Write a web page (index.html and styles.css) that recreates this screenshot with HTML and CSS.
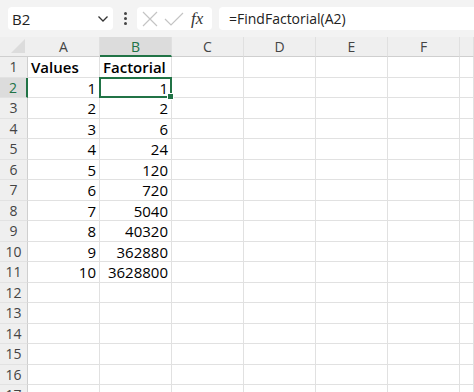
FILE: index.html
```html
<!DOCTYPE html>
<html lang="en">
  <head>
    <meta charset="UTF-8" />
    <title>FindFactorial</title>
    <link rel="stylesheet" href="styles.css">
  </head>
  <body>
    <div class="toolbar">
      <div class="name-box">
        <span>B2</span>
        <svg class="chevron" width="12" height="8" viewBox="0 0 12 8"><path d="M1.5 1.5 L6 6 L10.5 1.5" fill="none" stroke="#333" stroke-width="1.3"/></svg>
      </div>
      <div class="dots"><i></i><i></i><i></i></div>
      <div class="fx-box">
        <svg width="18" height="18" viewBox="0 0 18 18"><path d="M2 2 L16 16 M16 2 L2 16" stroke="#c4c4c4" stroke-width="1.2"/></svg>
        <svg width="20" height="18" viewBox="0 0 20 18"><path d="M1 9 L7 15 L19 3" fill="none" stroke="#c4c4c4" stroke-width="1.2"/></svg>
        <span class="fx">fx</span>
      </div>
      <div class="formula">=FindFactorial(A2)</div>
    </div>

    <div class="sheet">
      <div class="corner"><span class="tri"></span></div>
      <div class="col-head">A</div>
      <div class="col-head active">B</div>
      <div class="col-head">C</div>
      <div class="col-head">D</div>
      <div class="col-head">E</div>
      <div class="col-head">F</div>
      <div class="col-head"></div>

      <div class="row-head">1</div><div class="cell bold">Values</div><div class="cell bold">Factorial</div><div class="cell"></div><div class="cell"></div><div class="cell"></div><div class="cell"></div><div class="cell"></div>
      <div class="row-head active">2</div><div class="cell num">1</div><div class="cell num selected">1</div><div class="cell"></div><div class="cell"></div><div class="cell"></div><div class="cell"></div><div class="cell"></div>
      <div class="row-head">3</div><div class="cell num">2</div><div class="cell num">2</div><div class="cell"></div><div class="cell"></div><div class="cell"></div><div class="cell"></div><div class="cell"></div>
      <div class="row-head">4</div><div class="cell num">3</div><div class="cell num">6</div><div class="cell"></div><div class="cell"></div><div class="cell"></div><div class="cell"></div><div class="cell"></div>
      <div class="row-head">5</div><div class="cell num">4</div><div class="cell num">24</div><div class="cell"></div><div class="cell"></div><div class="cell"></div><div class="cell"></div><div class="cell"></div>
      <div class="row-head">6</div><div class="cell num">5</div><div class="cell num">120</div><div class="cell"></div><div class="cell"></div><div class="cell"></div><div class="cell"></div><div class="cell"></div>
      <div class="row-head">7</div><div class="cell num">6</div><div class="cell num">720</div><div class="cell"></div><div class="cell"></div><div class="cell"></div><div class="cell"></div><div class="cell"></div>
      <div class="row-head">8</div><div class="cell num">7</div><div class="cell num">5040</div><div class="cell"></div><div class="cell"></div><div class="cell"></div><div class="cell"></div><div class="cell"></div>
      <div class="row-head">9</div><div class="cell num">8</div><div class="cell num">40320</div><div class="cell"></div><div class="cell"></div><div class="cell"></div><div class="cell"></div><div class="cell"></div>
      <div class="row-head">10</div><div class="cell num">9</div><div class="cell num">362880</div><div class="cell"></div><div class="cell"></div><div class="cell"></div><div class="cell"></div><div class="cell"></div>
      <div class="row-head">11</div><div class="cell num">10</div><div class="cell num">3628800</div><div class="cell"></div><div class="cell"></div><div class="cell"></div><div class="cell"></div><div class="cell"></div>
      <div class="row-head">12</div><div class="cell"></div><div class="cell"></div><div class="cell"></div><div class="cell"></div><div class="cell"></div><div class="cell"></div><div class="cell"></div>
      <div class="row-head">13</div><div class="cell"></div><div class="cell"></div><div class="cell"></div><div class="cell"></div><div class="cell"></div><div class="cell"></div><div class="cell"></div>
      <div class="row-head">14</div><div class="cell"></div><div class="cell"></div><div class="cell"></div><div class="cell"></div><div class="cell"></div><div class="cell"></div><div class="cell"></div>
      <div class="row-head">15</div><div class="cell"></div><div class="cell"></div><div class="cell"></div><div class="cell"></div><div class="cell"></div><div class="cell"></div><div class="cell"></div>
      <div class="row-head">16</div><div class="cell"></div><div class="cell"></div><div class="cell"></div><div class="cell"></div><div class="cell"></div><div class="cell"></div><div class="cell"></div>
      <div class="row-head">17</div><div class="cell"></div><div class="cell"></div><div class="cell"></div><div class="cell"></div><div class="cell"></div><div class="cell"></div><div class="cell"></div>
    </div>
  </body>
</html>
```

FILE: styles.css
```css
body {
  margin: 0;
  width: 474px;
  height: 392px;
  overflow: hidden;
  background-color: #ffffff;
  font-family: "Open Sans", "Noto Sans", Arial, sans-serif;
  color: #000;
}

.toolbar {
  height: 37px;
  box-sizing: border-box;
  background-color: #f3f3f3;
  display: flex;
  align-items: center;
  padding: 0 0 0 8px;
}

.name-box {
  width: 105px;
  height: 23px;
  box-sizing: border-box;
  background-color: #fff;
  border-radius: 4px;
  display: flex;
  align-items: center;
  justify-content: space-between;
  padding: 0 4px;
  font-size: 15px;
  color: #222;
}

.dots {
  width: 24px;
  display: flex;
  flex-direction: column;
  align-items: center;
  gap: 2px;
}

.dots i {
  width: 3px;
  height: 3px;
  border-radius: 50%;
  background-color: #444;
}

.fx-box {
  width: 75px;
  height: 23px;
  box-sizing: border-box;
  background-color: #fff;
  border-radius: 4px;
  display: flex;
  align-items: center;
  gap: 5px;
  padding-left: 4px;
}

.fx {
  font-family: "Liberation Serif", "DejaVu Serif", serif;
  font-style: italic;
  font-size: 17px;
  color: #333;
  margin-left: 2px;
}

.formula {
  flex: 1;
  margin-left: 7px;
  height: 23px;
  background-color: #fff;
  border-radius: 4px 0 0 4px;
  display: flex;
  align-items: center;
  padding-left: 10px;
  font-size: 14px;
  color: #222;
}

.sheet {
  display: grid;
  grid-template-columns: 28px 72px 72px 72px 72px 72px 72px 1fr;
  grid-template-rows: 20px;
  grid-auto-rows: 20.5px;
}

.corner {
  background-color: #efefef;
  border-bottom: 1px solid #cfcfcf;
  box-sizing: border-box;
  position: relative;
}

.corner .tri {
  position: absolute;
  right: 3px;
  bottom: 3px;
  width: 0;
  height: 0;
  border-left: 14px solid transparent;
  border-bottom: 14px solid #dcdcdc;
}

.col-head {
  background-color: #efefef;
  border-bottom: 1px solid #cfcfcf;
  border-right: 1px solid #e0e0e0;
  box-sizing: border-box;
  text-align: center;
  font-size: 14px;
  line-height: 19px;
  color: #444;
}

.col-head.active {
  background-color: #dcdcdc;
  border-bottom: 2px solid #217346;
  color: #217346;
}

.row-head {
  background-color: #efefef;
  border-bottom: 1px solid #e2e2e2;
  border-right: 1px solid #cfcfcf;
  box-sizing: border-box;
  text-align: center;
  font-size: 14px;
  line-height: 20px;
  color: #444;
}

.row-head.active {
  background-color: #dcdcdc;
  border-right: 2px solid #217346;
  color: #217346;
}

.cell {
  border-right: 1px solid #e1e1e1;
  border-bottom: 1px solid #e1e1e1;
  box-sizing: border-box;
  font-size: 15px;
  line-height: 20px;
  padding: 0 3px;
  white-space: nowrap;
}

.bold {
  font-weight: 600;
}

.num {
  text-align: right;
}

.selected {
  position: relative;
}

.selected::after {
  content: "";
  position: absolute;
  left: -1px;
  top: -1px;
  right: -1px;
  bottom: -1px;
  border: 2px solid #217346;
}

.selected::before {
  content: "";
  position: absolute;
  right: -3px;
  bottom: -3px;
  width: 5px;
  height: 5px;
  background-color: #217346;
  border: 1px solid #fff;
  z-index: 2;
}
```
